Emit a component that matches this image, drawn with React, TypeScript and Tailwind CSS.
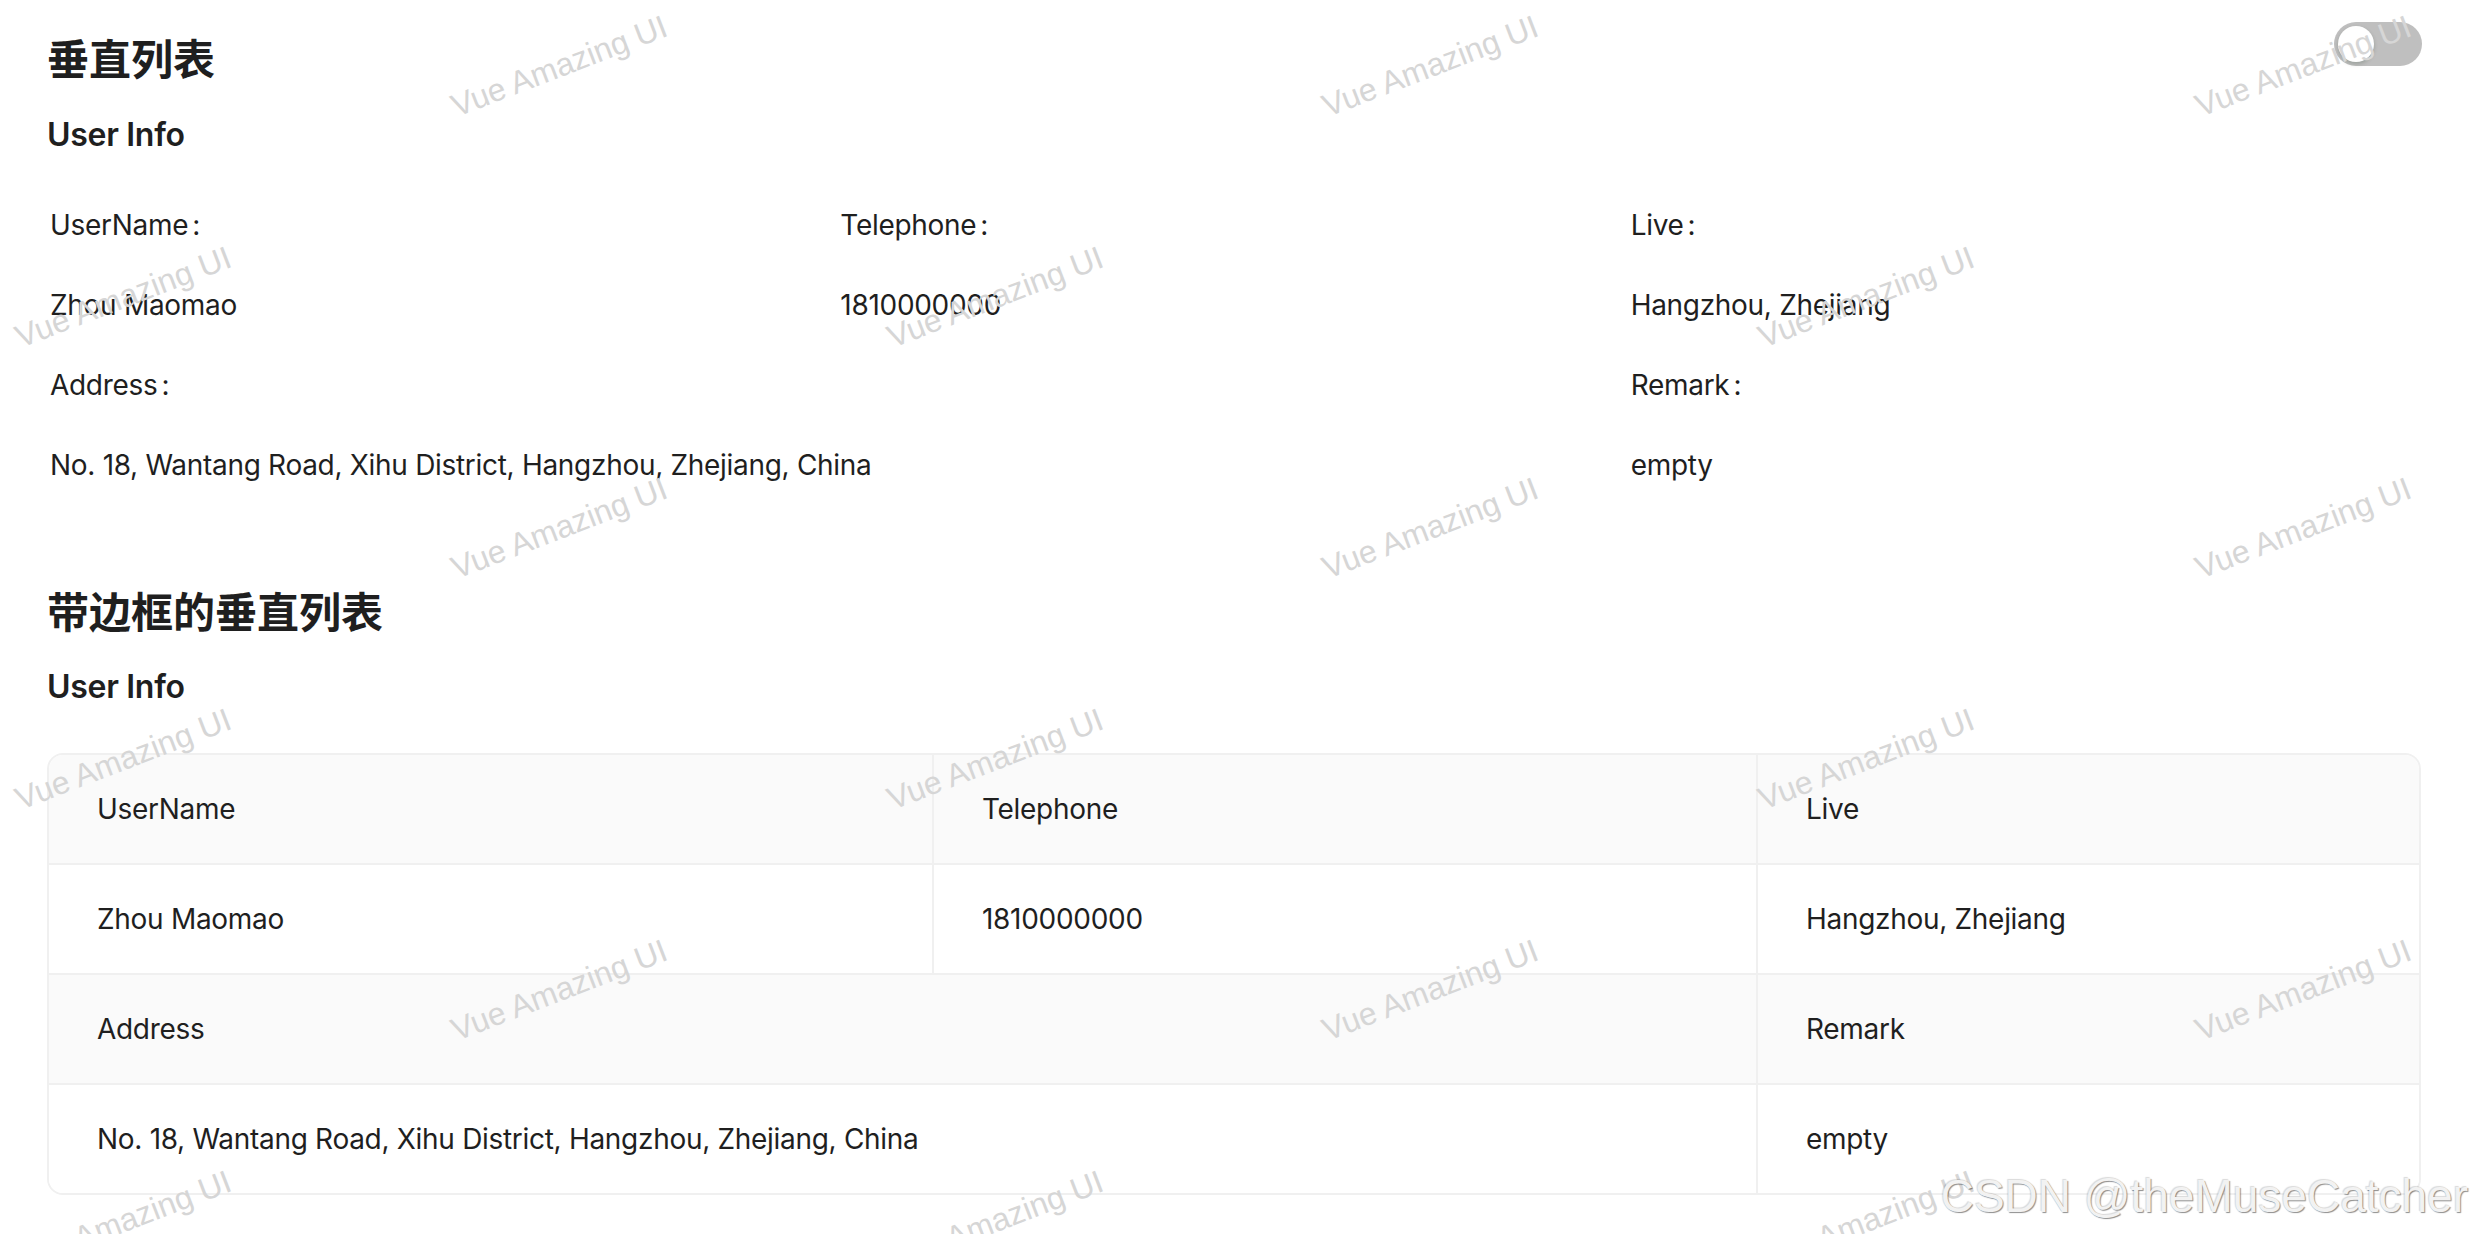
import React from "react";

const FONT = "font-['Inter','Noto_Sans_CJK_SC',sans-serif]";

function Watermarks() {
  const rows = [66, 297, 528, 759, 990, 1221];
  const marks: { x: number; y: number }[] = [];
  rows.forEach((y, i) => {
    const xs = i % 2 === 0 ? [559, 1430, 2303] : [123, 995, 1866];
    xs.forEach((x) => marks.push({ x, y }));
  });
  return (
    <div className="pointer-events-none absolute inset-0 overflow-hidden">
      {marks.map((m, i) => (
        <span
          key={i}
          className="absolute whitespace-nowrap font-['Liberation_Sans',Arial,sans-serif] text-[32px] leading-none text-[#d6d6d6]"
          style={{
            left: m.x,
            top: m.y,
            transform: "translate(-50%, -50%) rotate(-21deg)",
          }}
        >
          Vue Amazing UI
        </span>
      ))}
    </div>
  );
}

function Label({ text }: { text: string }) {
  return (
    <div className="pb-[36px] leading-[44px]">
      {text}
      <span className="ml-[4px] mr-[16px]">:</span>
    </div>
  );
}

function Value({ text }: { text: string }) {
  return <div className="pb-[36px] leading-[44px]">{text}</div>;
}

function PlainList() {
  return (
    <div className="mt-[44px] grid grid-cols-3 pl-[3px] text-[28px] tracking-[-0.3px] text-[#1f1f1f]">
      <div>
        <Label text="UserName" />
        <Value text="Zhou Maomao" />
      </div>
      <div>
        <Label text="Telephone" />
        <Value text="1810000000" />
      </div>
      <div>
        <Label text="Live" />
        <Value text="Hangzhou, Zhejiang" />
      </div>
      <div className="col-span-2">
        <Label text="Address" />
        <Value text="No. 18, Wantang Road, Xihu District, Hangzhou, Zhejiang, China" />
      </div>
      <div>
        <Label text="Remark" />
        <Value text="empty" />
      </div>
    </div>
  );
}

function Cell({
  text,
  head,
  className,
}: {
  text: string;
  head?: boolean;
  className?: string;
}) {
  return (
    <div
      className={`px-[48px] py-[32px] leading-[44px] ${head ? "bg-[#fafafa]" : "bg-white"} ${className ?? ""}`}
    >
      {text}
    </div>
  );
}

function BorderedList() {
  return (
    <div className="mt-[42px] overflow-hidden rounded-[16px] border-2 border-[#f0f0f0] text-[28px] tracking-[-0.3px] text-[#1f1f1f]">
      <div className="flex border-b-2 border-[#f0f0f0]">
        <Cell head text="UserName" className="w-[885px] border-r-2 border-[#f0f0f0]" />
        <Cell head text="Telephone" className="w-[824px] border-r-2 border-[#f0f0f0]" />
        <Cell head text="Live" className="flex-1" />
      </div>
      <div className="flex border-b-2 border-[#f0f0f0]">
        <Cell text="Zhou Maomao" className="w-[885px] border-r-2 border-[#f0f0f0]" />
        <Cell text="1810000000" className="w-[824px] border-r-2 border-[#f0f0f0]" />
        <Cell text="Hangzhou, Zhejiang" className="flex-1" />
      </div>
      <div className="flex border-b-2 border-[#f0f0f0]">
        <Cell head text="Address" className="w-[1709px] border-r-2 border-[#f0f0f0]" />
        <Cell head text="Remark" className="flex-1" />
      </div>
      <div className="flex">
        <Cell
          text="No. 18, Wantang Road, Xihu District, Hangzhou, Zhejiang, China"
          className="w-[1709px] border-r-2 border-[#f0f0f0]"
        />
        <Cell text="empty" className="flex-1" />
      </div>
    </div>
  );
}

export default function App() {
  return (
    <div className={`relative h-[1234px] w-full overflow-hidden bg-white ${FONT}`}>
      <div className="pl-[47px] pr-[49px] pt-[30px]">
        <h2 className="text-[42px] font-semibold leading-[60px] text-[#1f1f1f]">垂直列表</h2>
        <div className="mt-[21px] text-[32px] font-semibold leading-[48px] tracking-[-0.3px] text-[#1f1f1f]">User Info</div>
        <PlainList />

        <h2 className="mt-[60px] text-[42px] font-semibold leading-[60px] text-[#1f1f1f]">带边框的垂直列表</h2>
        <div className="mt-[20px] text-[32px] font-semibold leading-[48px] tracking-[-0.3px] text-[#1f1f1f]">User Info</div>
        <BorderedList />
      </div>

      {/* theme switch */}
      <div className="absolute right-[48px] top-[22px] h-[44px] w-[88px] rounded-full bg-[#bfbfbf]">
        <div className="absolute left-[4px] top-[4px] h-[36px] w-[36px] rounded-full bg-white shadow-[0_2px_4px_rgba(0,35,11,0.2)]" />
      </div>

      <Watermarks />

      <div className="pointer-events-none absolute right-[2px] top-[1168px] whitespace-nowrap font-['Liberation_Sans',Arial,sans-serif] text-[46px] leading-[56px] text-[#f2f2f2] [text-shadow:1px_1px_1px_rgba(0,0,0,0.45),-1px_-1px_1px_rgba(0,0,0,0.15)]">
        CSDN @theMuseCatcher
      </div>
    </div>
  );
}
